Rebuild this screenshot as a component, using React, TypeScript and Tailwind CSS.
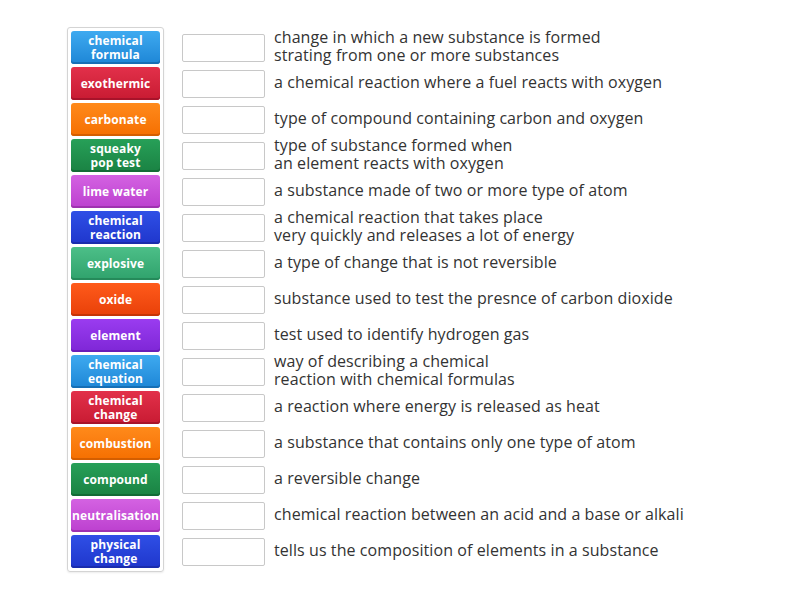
import React from "react";

type Tile = { lines: string[]; color: string };

// tile palette, light top to dark bottom
const palette = {
  blue: "bg-gradient-to-b from-[#3eaaf0] to-[#1d86d6] shadow-[inset_0_-2px_0_#166fb5]",
  red: "bg-gradient-to-b from-[#e2304a] to-[#c81a32] shadow-[inset_0_-2px_0_#a8132a]",
  orange: "bg-gradient-to-b from-[#ff8a1a] to-[#f56f00] shadow-[inset_0_-2px_0_#d45e00]",
  green: "bg-gradient-to-b from-[#27a058] to-[#1a8243] shadow-[inset_0_-2px_0_#136b36]",
  pink: "bg-gradient-to-b from-[#d462e2] to-[#bc3fcf] shadow-[inset_0_-2px_0_#9f31b0]",
  navy: "bg-gradient-to-b from-[#2f4fe6] to-[#1f36cc] shadow-[inset_0_-2px_0_#1a2cad]",
  teal: "bg-gradient-to-b from-[#4cbf88] to-[#2fa26c] shadow-[inset_0_-2px_0_#258a5a]",
  ember: "bg-gradient-to-b from-[#ff5a1a] to-[#e84008] shadow-[inset_0_-2px_0_#c53405]",
  purple: "bg-gradient-to-b from-[#9a3cf0] to-[#7e26d6] shadow-[inset_0_-2px_0_#6a1db8]",
};

const tiles: Tile[] = [
  { lines: ["chemical", "formula"], color: palette.blue },
  { lines: ["exothermic"], color: palette.red },
  { lines: ["carbonate"], color: palette.orange },
  { lines: ["squeaky", "pop test"], color: palette.green },
  { lines: ["lime water"], color: palette.pink },
  { lines: ["chemical", "reaction"], color: palette.navy },
  { lines: ["explosive"], color: palette.teal },
  { lines: ["oxide"], color: palette.ember },
  { lines: ["element"], color: palette.purple },
  { lines: ["chemical", "equation"], color: palette.blue },
  { lines: ["chemical", "change"], color: palette.red },
  { lines: ["combustion"], color: palette.orange },
  { lines: ["compound"], color: palette.green },
  { lines: ["neutralisation"], color: palette.pink },
  { lines: ["physical", "change"], color: palette.navy },
];

const definitions: string[][] = [
  ["change in which a new substance is formed", "strating from one or more substances"],
  ["a chemical reaction where a fuel reacts with oxygen"],
  ["type of compound containing carbon and oxygen"],
  ["type of substance formed when", "an element reacts with oxygen"],
  ["a substance made of two or more type of atom"],
  ["a chemical reaction that takes place", "very quickly and releases a lot of energy"],
  ["a type of change that is not reversible"],
  ["substance used to test the presnce of carbon dioxide"],
  ["test used to identify hydrogen gas"],
  ["way of describing a chemical", "reaction with chemical formulas"],
  ["a reaction where energy is released as heat"],
  ["a substance that contains only one type of atom"],
  ["a reversible change"],
  ["chemical reaction between an acid and a base or alkali"],
  ["tells us the composition of elements in a substance"],
];

function Lines({ lines }: { lines: string[] }) {
  return (
    <>
      {lines.map((l, i) => (
        <React.Fragment key={l}>
          {i > 0 && <br />}
          {l}
        </React.Fragment>
      ))}
    </>
  );
}

export default function App() {
  return (
    <div
      className="h-[600px] w-[800px] bg-white"
      style={{ fontFamily: '"Open Sans", "Noto Sans", sans-serif' }}
    >
      <div className="flex pl-[67px] pt-[27px]">
        <div className="flex w-[97px] flex-col gap-[3px] rounded-[3px] border border-[#d4d4d4] p-[3px] shadow-[0_1px_2px_rgba(0,0,0,0.08)]">
          {tiles.map((t) => (
            <div
              key={t.lines.join(" ")}
              className={`flex h-[33px] w-[89px] items-center justify-center whitespace-nowrap rounded-[3px] text-center text-[12px] font-bold leading-[14px] tracking-[0.1px] text-white ${t.color}`}
            >
              <p>
                <Lines lines={t.lines} />
              </p>
            </div>
          ))}
        </div>

        <div className="flex flex-col gap-[3px] pl-[18px] pt-[4px]">
          {definitions.map((lines, i) => (
            <div key={i} className="flex h-[33px] items-center">
              <div className="mt-[1px] h-[28px] w-[83px] shrink-0 rounded-[2px] border border-[#c8c8c8] bg-white" />
              <p className="-mt-[3px] whitespace-nowrap pl-[9px] text-[16px] leading-[18px] tracking-[0.08px] text-[#333333]">
                <Lines lines={lines} />
              </p>
            </div>
          ))}
        </div>
      </div>
    </div>
  );
}
